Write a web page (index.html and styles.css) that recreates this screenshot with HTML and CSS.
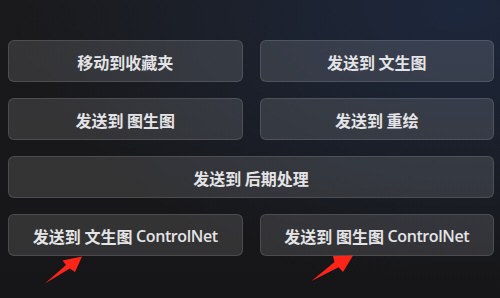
FILE: index.html
```html
<!DOCTYPE html>
<html lang="zh-CN">
<head>
<meta charset="utf-8">
<link rel="stylesheet" href="styles.css">
</head>
<body>
<div class="page">
  <div class="grid">
    <button class="btn">移动到收藏夹</button>
    <button class="btn">发送到 文生图</button>
    <button class="btn">发送到 图生图</button>
    <button class="btn">发送到 重绘</button>
    <button class="btn wide">发送到 后期处理</button>
    <button class="btn">发送到 文生图 <span class="latin">ControlNet</span></button>
    <button class="btn">发送到 图生图 <span class="latin">ControlNet</span></button>
  </div>
  <svg class="annot" width="500" height="298" viewBox="0 0 500 298">
    <polygon fill="#ff2418" points="45,283.5 66,265 62.5,260.5 82,256.5 75,272 69.8,268.6"/>
    <polygon fill="#ff2418" points="311.5,281 334.5,262 333,256 353,255.5 343,272 338.6,267.2"/>
  </svg>
</div>
</body>
</html>
```
FILE: styles.css
```css
html, body {
  margin: 0;
  padding: 0;
  width: 500px;
  height: 298px;
  overflow: hidden;
}
body {
  background:
    radial-gradient(ellipse 440px 270px at 460px 10px, rgba(30, 42, 66, 0.85), rgba(30, 42, 66, 0) 100%),
    linear-gradient(180deg, #1a1a1c 0%, #161618 100%);
  font-family: "Noto Sans CJK SC", "Noto Sans", sans-serif;
}
.page {
  position: relative;
  width: 500px;
  height: 298px;
  box-sizing: border-box;
  padding: 40px 6px 0 8px;
}
.grid {
  display: grid;
  grid-template-columns: 1fr 1fr;
  grid-auto-rows: 42px;
  column-gap: 17px;
  row-gap: 16px;
}
.btn {
  margin: 0;
  box-sizing: border-box;
  height: 42px;
  border: 1px solid rgba(255, 255, 255, 0.12);
  border-radius: 6px;
  background: rgba(255, 255, 255, 0.12);
  color: #e4e4e6;
  font-family: "Noto Sans CJK SC", "Noto Sans", sans-serif;
  font-size: 16px;
  font-weight: 700;
  padding: 1px 8px 0;
  display: flex;
  align-items: center;
  justify-content: center;
  white-space: pre;
}
.latin {
  font-family: "Open Sans", "Noto Sans", sans-serif;
  font-weight: 600;
  font-size: 16px;
  letter-spacing: -0.4px;
}
.wide {
  grid-column: 1 / span 2;
}
.annot {
  position: absolute;
  left: 0;
  top: 0;
  pointer-events: none;
}
```
